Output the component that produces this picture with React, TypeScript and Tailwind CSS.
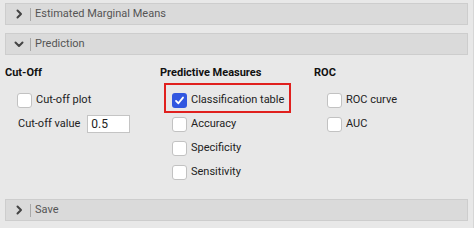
function Chevron({ open }: { open?: boolean }) {
  return (
    <svg width="10" height="10" viewBox="0 0 10 10" className="text-[#444]">
      <path
        d={open ? "M1.5 3.5 L5 7 L8.5 3.5" : "M3.5 1.5 L7 5 L3.5 8.5"}
        fill="none"
        stroke="currentColor"
        strokeWidth="2"
        strokeLinecap="round"
        strokeLinejoin="round"
      />
    </svg>
  );
}

function SectionBar({ title, open }: { title: string; open?: boolean }) {
  return (
    <div className="mx-[5px] h-[22px] flex items-center border border-[#cdcdcd] bg-[#dadada]">
      <div className="w-[24px] flex justify-center pl-[2px]">
        <Chevron open={open} />
      </div>
      <div className="w-px h-[13px] bg-[#a9a9a9]" />
      <span className="pl-[4px] text-[11px] text-[#555]">{title}</span>
    </div>
  );
}

function Check({ label, checked }: { label: string; checked?: boolean }) {
  return (
    <label className="flex items-center gap-[4px] h-[24px] text-[11px] text-[#222]">
      {checked ? (
        <span className="w-[15px] h-[15px] rounded-[3px] bg-[#3157e0] flex items-center justify-center">
          <svg width="11" height="11" viewBox="0 0 12 12">
            <path
              d="M2.2 6.4 L4.8 9 L9.8 2.8"
              fill="none"
              stroke="white"
              strokeWidth="2"
              strokeLinecap="round"
              strokeLinejoin="round"
            />
          </svg>
        </span>
      ) : (
        <span className="w-[15px] h-[15px] rounded-[3px] bg-white border border-[#c2c2c2]" />
      )}
      {label}
    </label>
  );
}

export default function App() {
  return (
    <div
      className="w-[474px] h-[228px] bg-[#e8e8e8] overflow-hidden flex flex-col border-r border-[#d6d6d6]"
      style={{ fontFamily: "Roboto, 'Liberation Sans', sans-serif" }}
    >
      <div className="h-[3px]" />
      <SectionBar title="Estimated Marginal Means" />
      <div className="h-[8px]" />
      <SectionBar title="Prediction" open />

      <div className="flex pl-[5px] pt-[10px] h-[144px]">
        <div className="w-[155px]">
          <div className="h-[16px] leading-[16px] text-[11px] font-bold text-[#111]">Cut-Off</div>
          <div className="pl-[12px] pt-[7px]">
            <Check label="Cut-off plot" />
          </div>
          <div className="flex items-center gap-[7px] pl-[13px] h-[24px] text-[11px] text-[#222]">
            Cut-off value
            <div className="w-[43px] h-[18px] bg-white border border-[#c4c4c4] text-[12px] pl-[3px] leading-[16px]">
              0.5
            </div>
          </div>
        </div>

        <div className="w-[154px]">
          <div className="h-[16px] leading-[16px] text-[11px] font-bold text-[#111]">
            Predictive Measures
          </div>
          <div className="pl-[12px] pt-[7px] relative">
            <div className="absolute left-[4px] top-[2px] w-[127px] h-[30px] border-2 border-[#e0201e]" />
            <Check label="Classification table" checked />
            <Check label="Accuracy" />
            <Check label="Specificity" />
            <Check label="Sensitivity" />
          </div>
        </div>

        <div className="flex-1">
          <div className="h-[16px] leading-[16px] text-[11px] font-bold text-[#111]">ROC</div>
          <div className="pl-[13px] pt-[7px]">
            <Check label="ROC curve" />
            <Check label="AUC" />
          </div>
        </div>
      </div>

      <SectionBar title="Save" />
    </div>
  );
}
